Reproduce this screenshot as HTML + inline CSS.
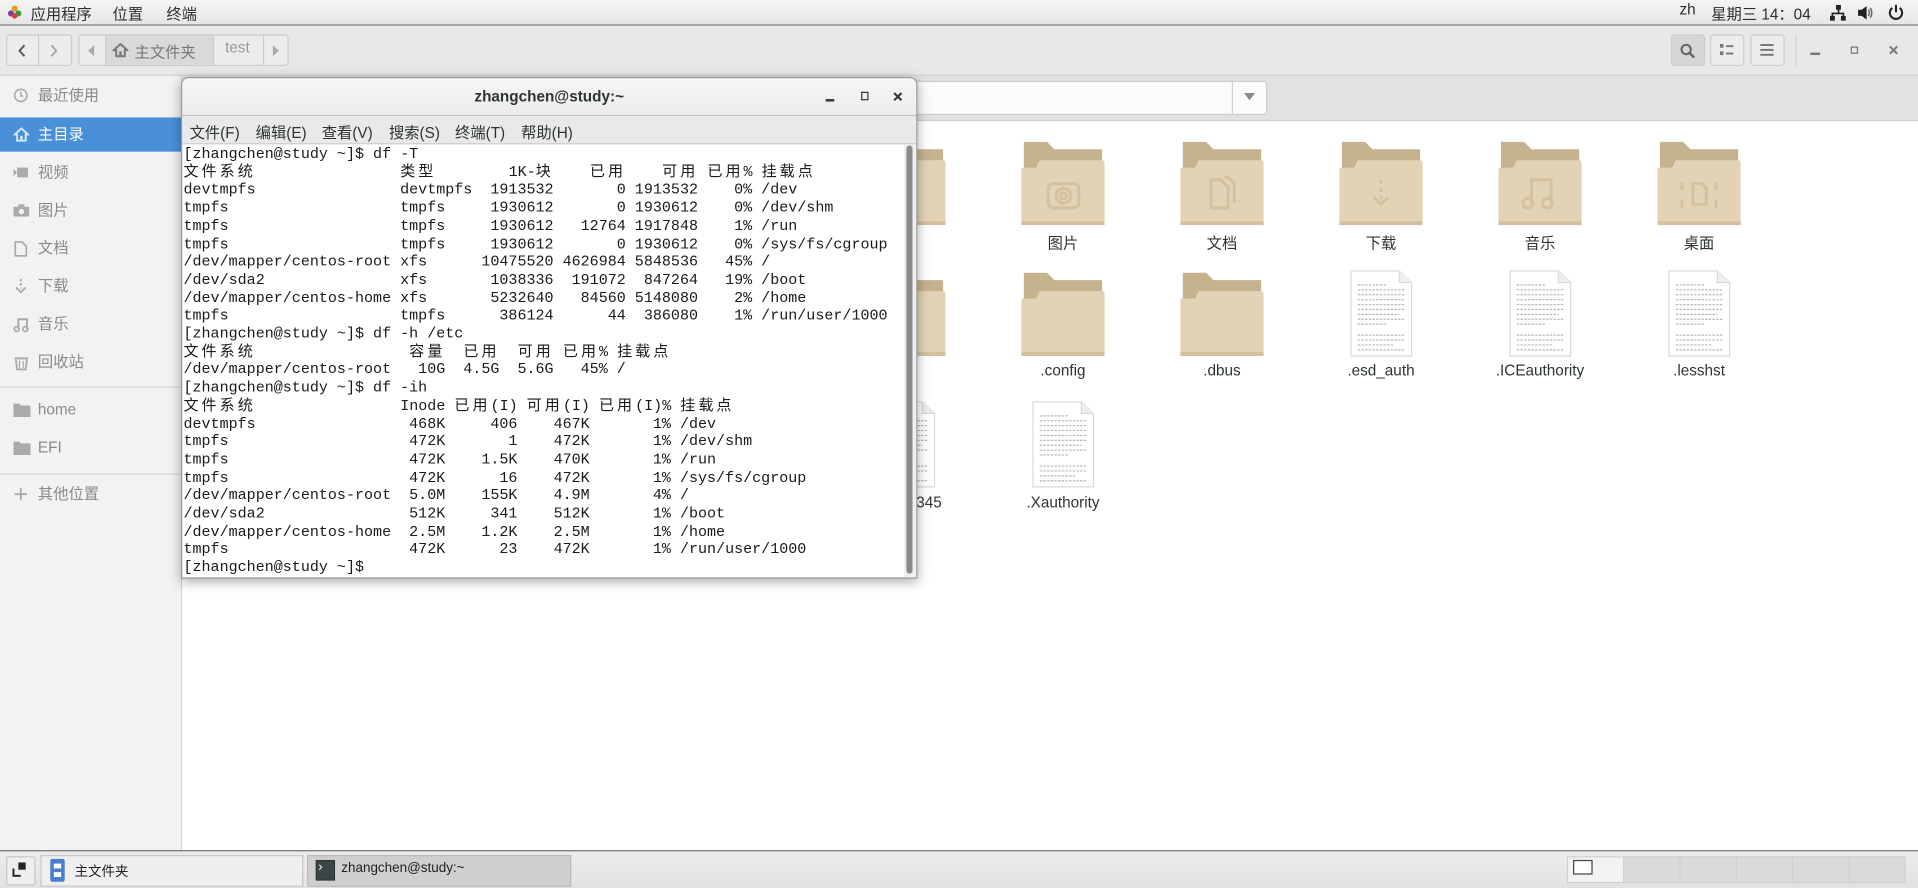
<!DOCTYPE html>
<html><head><meta charset="utf-8">
<style>
html,body{margin:0;padding:0;width:1918px;height:888px;overflow:hidden;background:#fff}
#s{position:absolute;left:0;top:0;width:1568px;height:726px;transform:scale(1.22321);transform-origin:0 0;font-family:"Liberation Sans","Noto Sans CJK SC",sans-serif;color:#2e3436;overflow:hidden}
.a{position:absolute}
.top{left:0;top:0;width:1568px;height:20px;background:linear-gradient(#f4f4f4,#e6e6e6);border-bottom:1px solid #6f6f6f;font-size:12.5px;color:#2e2e2e}
.top span{position:absolute;top:1px}
.hdr{left:0;top:21px;width:1568px;height:40px;background:#e8e8e8;border-bottom:1px solid #cfcfcf}
.btn{position:absolute;top:7px;height:26px;border:1px solid #cdcdcd;border-radius:3px;background:#ececec;box-sizing:border-box}
.side{left:0;top:62px;width:148px;height:633px;background:#f2f2f2;border-right:1px solid #d6d6d6;font-size:12.5px;color:#8a8a8a}
.si{position:absolute;left:0;width:148px;height:28px;line-height:28px}
.si .t{position:absolute;left:31px}
.si svg{position:absolute;left:11px;top:8px}
.sep{position:absolute;left:0;width:148px;height:1px;background:#d9d9d9}
.loc{left:149px;top:62px;width:1419px;height:36px;background:#e2e2e2;border-bottom:1px solid #cfcfcf}
.lab{position:absolute;width:130px;text-align:center;font-size:12.5px;color:#2e3436}
.term{left:148px;top:63px;width:600px;height:408px;background:#fff;border:1px solid #9a9a9a;border-radius:6px 6px 0 0;box-shadow:0 2px 10px rgba(0,0,0,.35);overflow:hidden}
.tt{position:absolute;left:0;top:0;width:600px;height:30px;background:linear-gradient(#f6f6f6,#ececec);border-bottom:1px solid #c4c4c4;text-align:center;line-height:30px;font-size:12.5px;color:#2e3436;font-weight:bold}
.tm{position:absolute;left:0;top:31px;width:600px;height:22px;background:#e9e9e9;border-bottom:1px solid #cfcfcf;font-size:12.5px;color:#2e3436}
.tm span{position:absolute;top:3px}
pre{position:absolute;left:1px;top:55px;margin:0;font-family:"Liberation Mono","Noto Sans CJK SC",monospace;font-size:12.3px;line-height:14.7px;color:#1a1a1a}
.k{letter-spacing:2.48px}
.task{left:0;top:695px;width:1568px;height:31px;background:linear-gradient(#ececec,#e2e2e2);border-top:1px solid #6f6f6f}
.ws{position:absolute;top:4px;width:45px;height:20px;background:#dadada;border:1px solid #d0d0d0}
</style></head><body><div id="s">

<div class="a top">
 <svg class="a" style="left:6px;top:4px" width="12" height="12" viewBox="0 0 12 12"><circle cx="6" cy="3" r="2.5" fill="#e0a020"/><circle cx="3" cy="7" r="2.5" fill="#7a3fa0"/><circle cx="9" cy="7" r="2.5" fill="#3a9a3a"/><circle cx="6" cy="9" r="2.3" fill="#d04040"/></svg>
 <span style="left:25px">应用程序</span><span style="left:92px">位置</span><span style="left:136px">终端</span>
 <span style="left:1373px">zh</span><span style="left:1399px">星期三 14：04</span>
 <svg class="a" style="left:1496px;top:4px" width="13" height="13" viewBox="0 0 13 13"><rect x="5" y="0" width="4" height="4" fill="#222"/><rect x="0" y="9" width="4" height="4" fill="#222"/><rect x="9" y="9" width="4" height="4" fill="#222"/><path d="M7 4V7M2 9V7H11V9" stroke="#222" stroke-width="1.4" fill="none"/></svg>
 <svg class="a" style="left:1518px;top:4px" width="13" height="13" viewBox="0 0 13 13"><path d="M1 4H4L8 1V12L4 9H1Z" fill="#222"/><path d="M9.5 4Q11 6.5 9.5 9M11 2.5Q13.5 6.5 11 10.5" stroke="#666" stroke-width="1.2" fill="none"/></svg>
 <svg class="a" style="left:1543px;top:3px" width="14" height="14" viewBox="0 0 14 14"><path d="M4 3.5A5 5 0 1 0 10 3.5" stroke="#222" stroke-width="1.7" fill="none"/><path d="M7 1V7" stroke="#222" stroke-width="1.7"/></svg>
</div>

<div class="a hdr">
 <div class="btn" style="left:5px;width:54px"></div>
 <div class="a" style="left:31px;top:7px;width:1px;height:26px;background:#cdcdcd"></div>
 <svg class="a" style="left:14px;top:15px" width="8" height="11"><path d="M6 1L2 5.5L6 10" stroke="#555" stroke-width="1.6" fill="none"/></svg>
 <svg class="a" style="left:40px;top:15px" width="8" height="11"><path d="M2 1L6 5.5L2 10" stroke="#aaa" stroke-width="1.6" fill="none"/></svg>
 <div class="btn" style="left:64px;width:172px"></div>
 <div class="a" style="left:86px;top:8px;width:87px;height:24px;background:#d9d9d9;border-left:1px solid #cdcdcd;border-right:1px solid #cdcdcd"></div>
 <div class="a" style="left:215px;top:8px;width:1px;height:24px;background:#cdcdcd"></div>
 <svg class="a" style="left:72px;top:16px" width="6" height="9"><path d="M5 0V9L0 4.5Z" fill="#aaa"/></svg>
 <svg class="a" style="left:223px;top:16px" width="6" height="9"><path d="M0 0V9L5 4.5Z" fill="#aaa"/></svg>
 <svg class="a" style="left:92px;top:14px" width="13" height="12" viewBox="0 0 13 12"><path d="M6.5 1L1 6H3V11H10V6H12Z" fill="none" stroke="#777" stroke-width="1.6"/><rect x="5.5" y="7" width="2" height="4" fill="#777"/></svg>
 <span class="a" style="left:110px;top:11px;font-size:12.5px;color:#777">主文件夹</span>
 <span class="a" style="left:184px;top:11px;font-size:12.5px;color:#999">test</span>
 <div class="btn" style="left:1366px;width:28px;background:#d6d6d6"></div>
 <svg class="a" style="left:1373px;top:14px" width="14" height="14"><circle cx="5.5" cy="5.5" r="3.8" stroke="#666" stroke-width="1.7" fill="none"/><path d="M8.3 8.3L12 12" stroke="#666" stroke-width="2"/></svg>
 <div class="btn" style="left:1398px;width:28px"></div>
 <svg class="a" style="left:1406px;top:15px" width="12" height="10"><rect x="0" y="0" width="3" height="3" fill="#777"/><rect x="0" y="6" width="3" height="3" fill="#777"/><rect x="5" y="1" width="6" height="1.5" fill="#777"/><rect x="5" y="7" width="6" height="1.5" fill="#777"/></svg>
 <div class="btn" style="left:1431px;width:28px"></div>
 <svg class="a" style="left:1439px;top:15px" width="12" height="10"><rect x="0" y="0" width="11" height="1.6" fill="#777"/><rect x="0" y="4" width="11" height="1.6" fill="#777"/><rect x="0" y="8" width="11" height="1.6" fill="#777"/></svg>
 <div class="a" style="left:1468px;top:7px;width:1px;height:26px;background:#d4d4d4"></div>
 <div class="a" style="left:1480px;top:22px;width:8px;height:2px;background:#777"></div>
 <div class="a" style="left:1513px;top:17px;width:4px;height:4px;border:1.5px solid #777"></div>
 <svg class="a" style="left:1544px;top:16px" width="8" height="8"><path d="M1 1L7 7M7 1L1 7" stroke="#777" stroke-width="1.6"/></svg>
</div>

<div class="a side">
 <div class="si" style="top:2px"><svg width="12" height="12"><circle cx="6" cy="6" r="5" stroke="#aaa" stroke-width="1.3" fill="none"/><path d="M6 3V6.5H8" stroke="#aaa" stroke-width="1.2" fill="none"/></svg><span class="t">最近使用</span></div>
 <div class="si" style="top:34px;background:#4a90d9;color:#fff"><svg width="13" height="12" viewBox="0 0 13 12"><path d="M6.5 1L1 6H3V11H10V6H12Z" fill="none" stroke="#d6e6f8" stroke-width="1.6"/><rect x="5.5" y="7" width="2" height="4" fill="#d6e6f8"/></svg><span class="t">主目录</span></div>
 <div class="si" style="top:65px"><svg width="12" height="12"><path d="M0 3L3 6L0 9Z" fill="#aaa"/><rect x="3" y="2" width="9" height="8" fill="#aaa"/></svg><span class="t">视频</span></div>
 <div class="si" style="top:96px"><svg width="13" height="12"><rect x="0" y="3" width="13" height="8" rx="1" fill="#aaa"/><rect x="4" y="1" width="5" height="3" fill="#aaa"/><circle cx="6.5" cy="7" r="2.2" fill="#f2f2f2"/></svg><span class="t">图片</span></div>
 <div class="si" style="top:127px"><svg width="12" height="13"><path d="M1.5 .8H7L10.5 4.3V12.2H1.5Z" stroke="#aaa" stroke-width="1.4" fill="none"/></svg><span class="t">文档</span></div>
 <div class="si" style="top:158px"><svg width="12" height="13"><path d="M6 0V2M6 3.5V5.5M6 7V8" stroke="#aaa" stroke-width="1.5"/><path d="M2 7L6 11L10 7" stroke="#aaa" stroke-width="1.5" fill="none"/></svg><span class="t">下载</span></div>
 <div class="si" style="top:189px"><svg width="13" height="13"><path d="M4 10V2H11V10" stroke="#aaa" stroke-width="1.6" fill="none"/><circle cx="2.7" cy="10" r="2" stroke="#aaa" stroke-width="1.4" fill="none"/><circle cx="9.7" cy="10" r="2" stroke="#aaa" stroke-width="1.4" fill="none"/></svg><span class="t">音乐</span></div>
 <div class="si" style="top:220px"><svg width="13" height="13"><path d="M1 3H12" stroke="#aaa" stroke-width="1.6"/><path d="M2 4L3 12H10L11 4" stroke="#aaa" stroke-width="1.5" fill="none"/><path d="M5 5V11M8 5V11" stroke="#aaa" stroke-width="1"/></svg><span class="t">回收站</span></div>
 <div class="sep" style="top:254px"></div>
 <div class="si" style="top:259px"><svg width="14" height="12"><path d="M0 1H5L6 2.5H14V12H0Z" fill="#aaa"/></svg><span class="t">home</span></div>
 <div class="si" style="top:290px"><svg width="14" height="12"><path d="M0 1H5L6 2.5H14V12H0Z" fill="#aaa"/></svg><span class="t">EFI</span></div>
 <div class="sep" style="top:325px"></div>
 <div class="si" style="top:328px"><svg width="12" height="12"><path d="M6 1V11M1 6H11" stroke="#aaa" stroke-width="1.5"/></svg><span class="t">其他位置</span></div>
</div>

<div class="a loc">
 <div class="a" style="left:590px;top:4px;width:295px;height:26px;background:#fbfbfb;border:1px solid #cdcdcd;border-radius:3px"></div>
 <div class="a" style="left:858px;top:5px;width:1px;height:26px;background:#d0d0d0"></div>
 <svg class="a" style="left:868px;top:14px" width="9" height="6"><path d="M0 0H9L4.5 6Z" fill="#888"/></svg>
</div>

<svg class="a" style="left:0;top:0" width="1568" height="700">
 <defs>
  <g id="f">
   <path d="M2 1H21L27 7H66V62H2Z" fill="#c5b38f"/>
   <path d="M0 24Q0 22 2 22H12L15 16H66Q68 16 68 18V68H0Z" fill="#e3d3b6"/>
   <rect x="0" y="66" width="68" height="3" fill="#d2bf9d"/>
  </g>
  <g id="d">
   <path d="M0.5 0.5H40L50 10V70H0.5Z" fill="#fff" stroke="#d9d9d9"/>
   <path d="M40 0.5V10H50" fill="#eee" stroke="#d9d9d9"/>
   <g stroke="#b8b8b8" stroke-width="1" stroke-dasharray="2 1">
    <path d="M6 12H30M6 16H44M6 20H44M6 24H44M6 28H44M6 32H44M6 36H40M6 40H44M6 44H30M6 53H44M6 57H44M6 61H36M6 65H44"/>
   </g>
  </g>
 </defs>
 <use href="#f" x="705" y="115"/>
 <use href="#f" x="835" y="115"/>
 <use href="#f" x="965" y="115"/>
 <use href="#f" x="1095" y="115"/>
 <use href="#f" x="1225" y="115"/>
 <use href="#f" x="1355" y="115"/>
 <use href="#f" x="705" y="222"/>
 <use href="#f" x="835" y="222"/>
 <use href="#f" x="965" y="222"/>
 <use href="#d" x="1104" y="221"/>
 <use href="#d" x="1234" y="221"/>
 <use href="#d" x="1364" y="221"/>
 <use href="#d" x="714" y="328"/>
 <use href="#d" x="844" y="328"/>
 <g fill="none" stroke="#d3c19f" stroke-width="2.5">
  <rect x="857" y="150" width="25" height="20" rx="4"/><circle cx="869.5" cy="160" r="6"/><circle cx="869.5" cy="160" r="2.5"/>
  <path d="M990 147H998L1004 153V170H990Z M1001 145H1004L1009 150V166"/>
  <path d="M1129 147V150M1129 154V157M1129 160V163M1123 161L1129 167L1135 161"/>
  <path d="M1252 166V147H1268V166"/><circle cx="1249" cy="166" r="4"/><circle cx="1265" cy="166" r="4"/>
  <path d="M1375 149V155M1375 164V170M1403 149V155M1403 164V170M1384 150H1391L1395 154V167H1384Z"/>
 </g>
</svg>
<div class="lab" style="left:804px;top:188px">图片</div>
<div class="lab" style="left:934px;top:188px">文档</div>
<div class="lab" style="left:1064px;top:188px">下载</div>
<div class="lab" style="left:1194px;top:188px">音乐</div>
<div class="lab" style="left:1324px;top:188px">桌面</div>
<div class="lab" style="left:804px;top:296px">.config</div>
<div class="lab" style="left:934px;top:296px">.dbus</div>
<div class="lab" style="left:1064px;top:296px">.esd_auth</div>
<div class="lab" style="left:1194px;top:296px">.ICEauthority</div>
<div class="lab" style="left:1324px;top:296px">.lesshst</div>
<div class="lab" style="left:674px;top:404px">xauth.3345</div>
<div class="lab" style="left:804px;top:404px">.Xauthority</div>

<div class="a term">
 <div class="tt">zhangchen@study:~
  <div class="a" style="left:526px;top:17px;width:7px;height:2px;background:#333"></div>
  <div class="a" style="left:555px;top:11px;width:4px;height:5px;border:1.6px solid #333"></div>
  <svg class="a" style="left:581px;top:11px" width="8" height="8"><path d="M1 1L7 7M7 1L1 7" stroke="#333" stroke-width="1.7"/></svg>
 </div>
 <div class="tm"><span style="left:6px">文件(F)</span><span style="left:60px">编辑(E)</span><span style="left:114px">查看(V)</span><span style="left:169px">搜索(S)</span><span style="left:223px">终端(T)</span><span style="left:277px">帮助(H)</span></div>
 <div class="a" style="left:590px;top:54px;width:10px;height:354px;background:#f0f0f0"></div>
 <div class="a" style="left:592px;top:55px;width:5px;height:350px;background:#8a8a8a;border-radius:3px"></div>
<pre>[zhangchen@study ~]$ df -T
<span class="k">文件系统</span>                <span class="k">类型</span>        1K-<span class="k">块</span>    <span class="k">已用</span>    <span class="k">可用</span> <span class="k">已用</span>% <span class="k">挂载点</span>
devtmpfs                devtmpfs  1913532       0 1913532    0% /dev
tmpfs                   tmpfs     1930612       0 1930612    0% /dev/shm
tmpfs                   tmpfs     1930612   12764 1917848    1% /run
tmpfs                   tmpfs     1930612       0 1930612    0% /sys/fs/cgroup
/dev/mapper/centos-root xfs      10475520 4626984 5848536   45% /
/dev/sda2               xfs       1038336  191072  847264   19% /boot
/dev/mapper/centos-home xfs       5232640   84560 5148080    2% /home
tmpfs                   tmpfs      386124      44  386080    1% /run/user/1000
[zhangchen@study ~]$ df -h /etc
<span class="k">文件系统</span>                 <span class="k">容量</span>  <span class="k">已用</span>  <span class="k">可用</span> <span class="k">已用</span>% <span class="k">挂载点</span>
/dev/mapper/centos-root   10G  4.5G  5.6G   45% /
[zhangchen@study ~]$ df -ih
<span class="k">文件系统</span>                Inode <span class="k">已用</span>(I) <span class="k">可用</span>(I) <span class="k">已用</span>(I)% <span class="k">挂载点</span>
devtmpfs                 468K     406    467K       1% /dev
tmpfs                    472K       1    472K       1% /dev/shm
tmpfs                    472K    1.5K    470K       1% /run
tmpfs                    472K      16    472K       1% /sys/fs/cgroup
/dev/mapper/centos-root  5.0M    155K    4.9M       4% /
/dev/sda2                512K     341    512K       1% /boot
/dev/mapper/centos-home  2.5M    1.2K    2.5M       1% /home
tmpfs                    472K      23    472K       1% /run/user/1000
[zhangchen@study ~]$</pre>
</div>

<div class="a task">
 <div class="a" style="left:5px;top:4px;width:22px;height:22px;border:1px solid #c8c8c8;border-radius:2px;background:#eee"></div>
 <svg class="a" style="left:10px;top:9px" width="12" height="12"><rect x="5" y="0" width="6" height="6" fill="#222"/><path d="M1 5V11H7" stroke="#222" stroke-width="1.6" fill="none"/></svg>
 <div class="a" style="left:33px;top:3px;width:213px;height:24px;border:1px solid #c8c8c8;background:#efefef"></div>
 <svg class="a" style="left:41px;top:6px" width="12" height="19"><rect x="0" y="0" width="12" height="19" rx="2" fill="#4a7fcf"/><rect x="3" y="4" width="6" height="4" fill="#fff"/><rect x="3" y="11" width="6" height="4" fill="#fff"/></svg>
 <span class="a" style="left:61px;top:8px;font-size:11px;color:#222">主文件夹</span>
 <div class="a" style="left:251px;top:3px;width:214px;height:24px;border:1px solid #bcbcbc;background:#cfcfcf"></div>
 <svg class="a" style="left:258px;top:7px" width="16" height="17"><rect x="0" y="0" width="16" height="17" fill="#2e3436"/><rect x="1" y="1" width="14" height="15" fill="#3c4446"/><path d="M3 4L5 6L3 8" stroke="#ddd" stroke-width="1" fill="none"/></svg>
 <span class="a" style="left:279px;top:8px;font-size:11px;color:#222">zhangchen@study:~</span>
 <div class="ws" style="left:1281px;background:#f2f2f2"></div>
 <div class="a" style="left:1286px;top:7px;width:14px;height:10px;border:1px solid #444;background:#fff"></div>
 <div class="ws" style="left:1327px"></div>
 <div class="ws" style="left:1373px"></div>
 <div class="ws" style="left:1419px"></div>
 <div class="ws" style="left:1465px"></div>
 <div class="ws" style="left:1511px"></div>
</div>
</div></body></html>
